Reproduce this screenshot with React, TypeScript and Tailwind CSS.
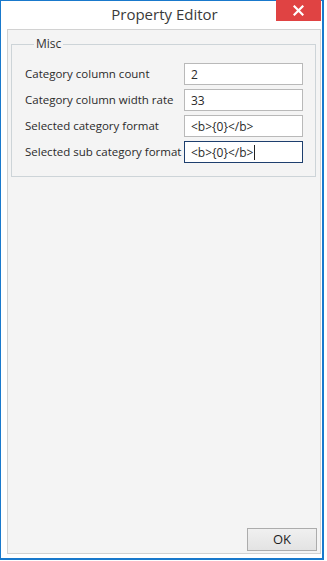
import { useState } from "react";

type Row = { label: string; value: string; focused?: boolean };

const rows: Row[] = [
  { label: "Category column count", value: "2" },
  { label: "Category column width rate", value: "33" },
  { label: "Selected category format", value: "<b>{0}</b>" },
  { label: "Selected sub category format", value: "<b>{0}</b>", focused: true },
];

const font = { fontFamily: '"Open Sans", "Noto Sans", Arial, sans-serif' };

export default function App() {
  const [values, setValues] = useState(rows.map((r) => r.value));

  return (
    <div className="w-[327px] h-[561px] bg-white" style={font}>
      <div className="w-[324px] h-[560px] border border-r-2 border-b-2 border-[#1979cc] bg-white flex flex-col">
        {/* title bar */}
        <div className="relative h-[28px] shrink-0 flex items-center justify-center">
          <span className="text-[15px] text-[#3a3a3a] pl-[6px] leading-none pb-[1px]">Property Editor</span>
          <button
            type="button"
            className="absolute top-[-1px] left-[275px] w-[45px] h-[21px] bg-[#e04343] flex items-center justify-center"
          >
            <svg width="11" height="11" viewBox="0 0 11 11">
              <path d="M1.5 1.5 L9.5 9.5 M9.5 1.5 L1.5 9.5" stroke="white" strokeWidth="2.2" strokeLinecap="square" />
            </svg>
          </button>
        </div>

        {/* content panel */}
        <div className="ml-[6px] w-[314px] h-[525px] border border-[#d2d2d2] bg-[#f4f4f4] flex flex-col">
          <fieldset className="mt-[6px] ml-[3px] w-[305px] border border-[#cdd4d8] pl-[13px] pr-[12px] pt-[11px] pb-[13px]">
            <legend className="ml-[9px] px-[2px] text-[12px] leading-[16px] text-[#333]">Misc</legend>
            <div className="flex flex-col gap-[4px]">
              {rows.map((r, i) => (
                <div key={r.label} className="flex items-center">
                  <span className="w-[159px] shrink-0 text-[11.5px] text-[#2b2b2b] whitespace-nowrap">{r.label}</span>
                  <div
                    className={
                      "w-[119px] h-[22px] bg-white border flex items-center px-[6px] " +
                      (r.focused ? "border-[#1e3f6e]" : "border-[#b9b9b9]")
                    }
                  >
                    <input
                      value={values[i]}
                      onChange={(e) => setValues(values.map((v, j) => (j === i ? e.target.value : v)))}
                      size={r.focused ? values[i].length : undefined}
                      className={
                        "h-full bg-transparent text-[12px] text-[#2b2b2b] outline-none p-0 " +
                        (r.focused ? "w-auto field-sizing-content" : "w-full")
                      }
                    />
                    {r.focused && <span className="w-px h-[15px] bg-[#222] ml-[1px]" />}
                  </div>
                </div>
              ))}
            </div>
          </fieldset>

          <div className="flex-1" />

          <button
            type="button"
            className="self-end mr-[3px] mb-[2px] w-[70px] h-[23px] border border-[#acacac] bg-gradient-to-b from-[#f0f0f0] to-[#e3e3e3] text-[13px] text-[#1e1e1e]"
          >
            OK
          </button>
        </div>
      </div>
    </div>
  );
}
